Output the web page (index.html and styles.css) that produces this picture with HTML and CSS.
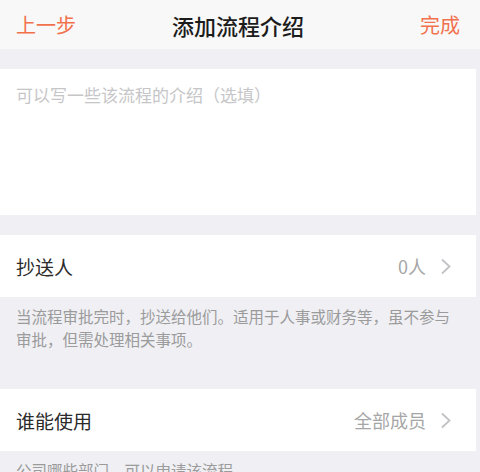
FILE: index.html
```html
<!DOCTYPE html>
<html lang="zh-CN">
<head>
  <meta charset="UTF-8">
  <meta name="viewport" content="width=device-width, initial-scale=1.0">
  <title>添加流程介绍</title>
  <link rel="stylesheet" href="styles.css">
</head>
<body>
  <!-- Nav bar -->
  <div class="navbar">
    <span class="nav-btn">上一步</span>
    <span class="nav-title">添加流程介绍</span>
    <span class="nav-btn nav-right">完成</span>
  </div>

  <!-- Intro text area -->
  <div class="intro-box">
    <div class="placeholder">可以写一些该流程的介绍（选填）</div>
  </div>

  <!-- CC -->
  <div class="cell">
    <span class="cell-label">抄送人</span>
    <span class="cell-value">0人</span>
    <svg class="chevron" width="12" height="17" viewBox="0 0 12 17">
      <path d="M2 1.5 L9.5 8.5 L2 15.5" fill="none" stroke="#c2c2c6" stroke-width="1.8"/>
    </svg>
  </div>
  <div class="note">当流程审批完时，抄送给他们。适用于人事或财务等，虽不参与审批，但需处理相关事项。</div>

  <!-- Who can use -->
  <div class="cell">
    <span class="cell-label">谁能使用</span>
    <span class="cell-value">全部成员</span>
    <svg class="chevron" width="12" height="17" viewBox="0 0 12 17">
      <path d="M2 1.5 L9.5 8.5 L2 15.5" fill="none" stroke="#c2c2c6" stroke-width="1.8"/>
    </svg>
  </div>
  <div class="note">公司哪些部门，可以申请该流程</div>
</body>
</html>
```

FILE: styles.css
```css
body {
  margin: 0;
  font-family: "Noto Sans CJK SC", "Noto Sans", sans-serif;
  background-color: #efeff4; /* iOS grouped gray */
  color: #222;
  overflow: hidden;
}

.navbar {
  height: 49px;
  background-color: #f8f8f8;
  display: grid;
  grid-template-columns: 1fr auto 1fr;
  align-items: center;
  padding: 0 20px 0 16px;
}

.nav-btn {
  font-size: 20px;
  color: #f2714d; /* orange */
}

.nav-right {
  text-align: right;
}

.nav-title {
  font-size: 22px;
  font-weight: 500;
  color: #1c1c1c;
}

.intro-box {
  background-color: white;
  margin: 20px 4px 20px 0;
  height: 146px;
  padding: 13px 16px;
  box-sizing: border-box;
}

.placeholder {
  font-size: 17px;
  line-height: 26px;
  color: #c6c6c8;
}

.cell {
  background-color: white;
  margin-right: 4px;
  height: 62px;
  display: flex;
  align-items: center;
  padding: 0 24px 0 16px;
}

.cell-label {
  font-size: 19px;
  color: #2a2a2a;
  flex: 1;
}

.cell-value {
  font-size: 18px;
  color: #a6a6a6;
  margin-right: 14px;
}

.chevron {
  display: block;
}

.note {
  font-size: 15.5px;
  line-height: 23px;
  color: #9b9b9b;
  padding: 8px 16px 38px 16px;
}
```
